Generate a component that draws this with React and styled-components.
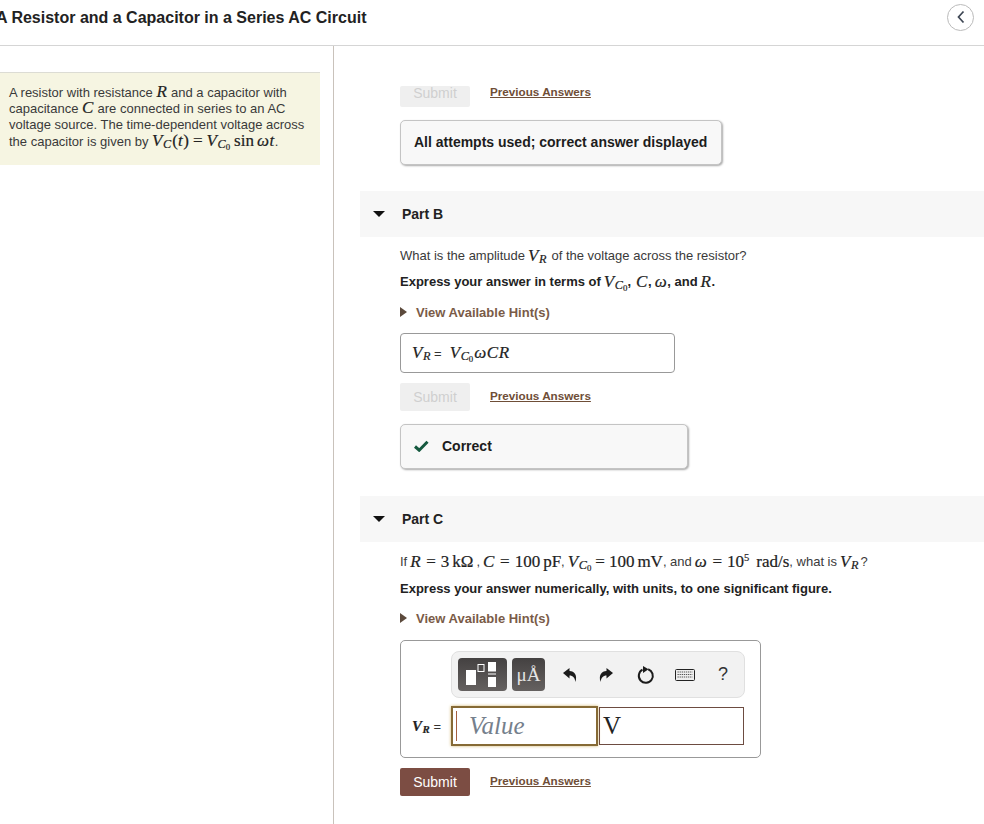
import React from "react";
import styled, { createGlobalStyle } from "styled-components";

const Global = createGlobalStyle`
  html, body { margin: 0; padding: 0; background: #fff; }
  body { font-family: "Liberation Sans", Arial, sans-serif; color: #333; }
`;

const Page = styled.div`
  width: 984px;
  height: 824px;
  overflow: hidden;
`;
const Header = styled.header`
  height: 45px;
  border-bottom: 1px solid #d5d5d5;
  display: flex;
  align-items: center;
  justify-content: space-between;
  padding: 0 10px 0 0;
`;
const Title = styled.h1`
  margin: -9px 0 0 -4px;
  font-size: 16px;
  font-weight: 700;
  line-height: 20px;
  color: #222;
  white-space: nowrap;
`;
const BackButton = styled.button`
  width: 27px;
  height: 27px;
  margin-top: -11px;
  padding: 0;
  border: 1px solid #bbb;
  border-radius: 50%;
  background: #fff;
  display: flex;
  align-items: center;
  justify-content: center;
`;
const Body = styled.div`
  display: grid;
  grid-template-columns: 334px 1fr;
  height: 778px;
`;
const Aside = styled.aside`
  border-right: 1px solid #c9c2bb;
  padding-top: 26px;
`;
const InfoBox = styled.div`
  box-sizing: border-box;
  width: 320px;
  height: 93px;
  padding: 12px 0 0 9px;
  background: #f6f5e2;
  border-top: 1px solid #dcdcd4;
  font-size: 13px;
  color: #3a3a3a;
`;
const InfoLine = styled.div`
  height: 16px;
  line-height: 16px;
  white-space: nowrap;
  margin-top: ${(p) => p.$top || 0}px;
  & > span {
    line-height: 0;
  }
`;
const Main = styled.main`
  padding-top: 40px;
`;
const Indented = styled.div`
  padding-left: 66px;
`;
const SubmitRow = styled.div`
  display: flex;
  align-items: ${(p) => (p.$clipped ? "flex-start" : "center")};
  gap: 20px;
  margin-top: ${(p) => p.$top || 0}px;
`;
const SubmitButton = styled.div`
  width: 70px;
  height: ${(p) => (p.$clipped ? 21 : 28)}px;
  border-radius: 2px;
  font-size: 14px;
  line-height: ${(p) => (p.$clipped ? 14 : 28)}px;
  text-align: center;
  overflow: hidden;
  background: ${(p) => (p.$active ? "#7c4d43" : "#efefef")};
  color: ${(p) => (p.$active ? "#fff" : "#cfcfcf")};
`;
const PrevLink = styled.a`
  font-size: 11.7px;
  font-weight: 700;
  line-height: 14px;
  color: #6f4e37;
  text-decoration: underline;
  margin-top: ${(p) => (p.$clipped ? -1 : -2)}px;
`;
const Feedback = styled.div`
  box-sizing: border-box;
  width: ${(p) => p.$width}px;
  height: 45px;
  margin-top: 13px;
  padding: 0 0 2px 13px;
  display: flex;
  align-items: center;
  gap: 13px;
  border: 1px solid #c4c4c4;
  border-radius: 5px;
  background: #f8f8f8;
  box-shadow: 1px 1px 2px #aaa;
  font-size: 14px;
  font-weight: 700;
  color: #1d1d1d;
`;
const PartHeader = styled.div`
  height: 46px;
  margin: ${(p) => p.$top}px 0 0 26px;
  padding-bottom: 1px;
  box-sizing: border-box;
  background: #f7f7f7;
  display: flex;
  align-items: center;
  font-size: 14px;
  font-weight: 700;
  color: #222;
`;
const Caret = styled.span`
  width: 0;
  height: 0;
  margin: 0 17px 0 13px;
  border-left: 6px solid transparent;
  border-right: 6px solid transparent;
  border-top: 6px solid #111;
`;
const Line = styled.div`
  height: 26px;
  display: flex;
  align-items: center;
  white-space: pre;
  font-size: 13px;
  font-weight: ${(p) => (p.$bold ? 700 : 400)};
  color: ${(p) => (p.$bold ? "#222" : "#3a3a3a")};
  margin-top: ${(p) => p.$top || 0}px;
`;
const Hint = styled.div`
  height: 26px;
  margin-top: ${(p) => p.$top}px;
  display: flex;
  align-items: center;
  gap: 9px;
  font-size: 13px;
  font-weight: 700;
  color: #7a5b47;
`;
const HintArrow = styled.span`
  width: 0;
  height: 0;
  border-top: 5.5px solid transparent;
  border-bottom: 5.5px solid transparent;
  border-left: 7px solid #5c4a3c;
`;
const AnswerBox = styled.div`
  box-sizing: border-box;
  width: 275px;
  height: 40px;
  margin-top: 8px;
  padding: 0 0 2px 11px;
  display: flex;
  align-items: center;
  gap: 8px;
  border: 1px solid #999;
  border-radius: 4px;
  font-size: 13px;
  color: #333;
`;
const Eq = styled.span`
  white-space: pre;
  line-height: 1;
  font-family: "Liberation Serif", serif;
  font-size: ${(p) => p.$size || 17}px;
  font-weight: ${(p) => p.$weight || 400};
  -webkit-text-stroke: 0.2px #222;
  color: #222;
  margin-left: ${(p) => p.$l ?? 3}px;
  margin-right: ${(p) => p.$r ?? 3}px;
`;
const I = styled.i`
  font-style: italic;
  letter-spacing: 0.6px;
`;
const Sub = styled.sub`
  font-size: 0.72em;
  line-height: 0;
  vertical-align: -0.18em;
  font-style: ${(p) => (p.$up ? "normal" : "italic")};
`;
const Sup = styled.sup`
  font-size: 0.62em;
  line-height: 0;
  vertical-align: 0.55em;
`;
const Sp = styled.span`
  display: inline-block;
  width: ${(p) => p.$w || 5}px;
`;
const EditorBox = styled.div`
  box-sizing: border-box;
  width: 361px;
  height: 118px;
  margin-top: 9px;
  padding-top: 10px;
  border: 1px solid #999;
  border-radius: 5px;
`;
const Toolbar = styled.div`
  box-sizing: border-box;
  width: 294px;
  height: 47px;
  margin-left: 50px;
  padding-left: 6px;
  display: flex;
  align-items: center;
  background: #f2f2f2;
  border: 1px solid #e0e0e0;
  border-radius: 8px;
`;
const ToolButton = styled.div`
  box-sizing: border-box;
  flex: none;
  width: ${(p) => p.$w}px;
  height: 33px;
  margin-right: ${(p) => p.$mr}px;
  border-radius: 4px;
  display: flex;
  align-items: center;
  justify-content: center;
  background: linear-gradient(#444141, #656160);
  font-family: "Liberation Serif", serif;
  font-size: 19px;
  color: #e4e4e4;
`;
const PlainTool = styled.div`
  flex: none;
  width: ${(p) => p.$w}px;
  height: 33px;
  margin-left: ${(p) => p.$ml || 0}px;
  display: flex;
  align-items: center;
  justify-content: center;
  font-size: 18px;
  color: #333;
`;
const InputRow = styled.div`
  display: flex;
  align-items: center;
  margin-top: 8px;
  padding-left: 11px;
`;
const InputLabel = styled.div`
  width: 39px;
  white-space: pre;
  font-size: 13px;
  color: #333;
`;
const ValueInput = styled.div`
  box-sizing: border-box;
  width: 147px;
  height: 40px;
  display: flex;
  align-items: center;
  border: 2px solid #866a35;
  box-shadow: 0 0 3px #d2b66f;
  font-family: "Liberation Serif", serif;
  font-style: italic;
  font-size: 25px;
  color: #75808c;
`;
const TextCaret = styled.span`
  width: 1px;
  height: 30px;
  margin: 0 12px 0 3px;
  background: #a5603f;
`;
const UnitInput = styled.div`
  box-sizing: border-box;
  width: 145px;
  height: 38px;
  margin-left: 1px;
  padding-left: 3px;
  border: 1px solid #6d4c41;
  font-family: "Liberation Serif", serif;
  font-size: 25px;
  line-height: 35px;
  color: #222;
`;

const V0 = () => (
  <>
    <I>V</I>
    <Sub>
      C
      <Sub $up>0</Sub>
    </Sub>
  </>
);
const VR = () => (
  <>
    <I>V</I>
    <Sub>R</Sub>
  </>
);

const Undo = ({ flip }) => (
  <svg width="16" height="16" viewBox="0 0 16 16" style={flip ? { transform: "scaleX(-1)" } : undefined}>
    <path d="M1 6 L7.5 1 V4 C12.5 4 15.5 8 13.5 15 C12.8 11 11 8.6 7.5 8.6 V11.5 Z" fill="#1c1c1c" />
  </svg>
);

export default function App() {
  return (
    <Page>
      <Global />
      <Header>
        <Title>A Resistor and a Capacitor in a Series AC Circuit</Title>
        <BackButton aria-label="Back">
          <svg width="10" height="14" viewBox="0 0 10 14">
            <path d="M7.5 1.5 L2.5 7 L7.5 12.5" fill="none" stroke="#3d4653" strokeWidth="1.7" />
          </svg>
        </BackButton>
      </Header>
      <Body>
        <Aside>
          <InfoBox>
            <InfoLine>
              A resistor with resistance <Eq $l={0} $r={0}><I>R</I></Eq> and a capacitor with
            </InfoLine>
            <InfoLine>
              capacitance <Eq $l={0} $r={0}><I>C</I></Eq> are connected in series to an AC
            </InfoLine>
            <InfoLine>voltage source. The time-dependent voltage across</InfoLine>
            <InfoLine $top={1}>
              the capacitor is given by{" "}
              <Eq $l={0} $r={0}>
                <I>V</I><Sub>C</Sub><Sp $w={1} />(<I>t</I>)<Sp $w={4} />=<Sp $w={4} /><V0 /><Sp $w={4} />sin<Sp $w={3} /><I>ωt</I>
              </Eq>
              .
            </InfoLine>
          </InfoBox>
        </Aside>
        <Main>
          <Indented>
            <SubmitRow $clipped>
              <SubmitButton $clipped>Submit</SubmitButton>
              <PrevLink $clipped>Previous Answers</PrevLink>
            </SubmitRow>
            <Feedback $width={322}>All attempts used; correct answer displayed</Feedback>
          </Indented>

          <PartHeader $top={26}>
            <Caret />
            Part B
          </PartHeader>
          <Indented>
            <Line $top={5}>
              What is the amplitude<Eq $r={5}><VR /></Eq>of the voltage across the resistor?
            </Line>
            <Line $bold>
              Express your answer in terms of<Eq $r={0}><V0 /></Eq>,<Eq $l={5} $r={0}><I>C</I></Eq>,<Eq $r={0}><I>ω</I></Eq>, and<Eq $r={0}><I>R</I></Eq>.
            </Line>
            <Hint $top={5}>
              <HintArrow />
              View Available Hint(s)
            </Hint>
            <AnswerBox>
              <span>
                <Eq $l={0} $r={0}><VR /></Eq> =
              </span>
              <Eq $l={0} $r={0}>
                <V0 /><Sp $w={1} /><I>ωCR</I>
              </Eq>
            </AnswerBox>
            <SubmitRow $top={10}>
              <SubmitButton>Submit</SubmitButton>
              <PrevLink>Previous Answers</PrevLink>
            </SubmitRow>
            <Feedback $width={288}>
              <svg width="15" height="12" viewBox="0 0 15 12">
                <path d="M1 6.5 L5.2 10.2 L13.5 1.8" fill="none" stroke="#15593f" strokeWidth="3" />
              </svg>
              Correct
            </Feedback>
          </Indented>

          <PartHeader $top={27}>
            <Caret />
            Part C
          </PartHeader>
          <Indented>
            <Line $top={6}>
              If<Eq>
                <I>R</I><Sp />=<Sp />3<Sp $w={3} />kΩ
              </Eq>
              ,<Eq $r={0}>
                <I>C</I><Sp />=<Sp />100<Sp $w={3} />pF
              </Eq>
              ,<Eq $r={0}>
                <V0 /><Sp $w={4} />=<Sp $w={4} />100<Sp $w={3} />mV
              </Eq>
              , and<Eq $r={0}>
                <I>ω</I><Sp />=<Sp />10<Sup>5</Sup><Sp $w={7} />rad/s
              </Eq>
              , what is<Eq $r={2}><VR /></Eq>?
            </Line>
            <Line $bold $top={1}>Express your answer numerically, with units, to one significant figure.</Line>
            <Hint $top={4}>
              <HintArrow />
              View Available Hint(s)
            </Hint>
            <EditorBox>
              <Toolbar>
                <ToolButton $w={49} $mr={5}>
                  <svg width="34" height="27" viewBox="0 0 34 27">
                    <rect x="0" y="9" width="10" height="15" fill="#fff" />
                    <rect x="12" y="3.5" width="6" height="7" fill="none" stroke="#fff" strokeWidth="1" />
                    <rect x="22" y="1" width="8" height="9.5" fill="#fff" />
                    <rect x="22" y="12.5" width="8" height="1" fill="#fff" />
                    <rect x="22" y="16" width="8" height="10" fill="#fff" />
                  </svg>
                </ToolButton>
                <ToolButton $w={33} $mr={0}>μÅ</ToolButton>
                <PlainTool $w={50}><Undo /></PlainTool>
                <PlainTool $w={22}><Undo flip /></PlainTool>
                <PlainTool $w={58}>
                  <svg width="18" height="20" viewBox="0 0 18 20">
                    <path d="M11.2 4.2 A7 7 0 1 1 5.5 4.6" fill="none" stroke="#1c1c1c" strokeWidth="2" />
                    <path d="M6 1 L11.5 4.3 L6 8 Z" fill="#1c1c1c" />
                  </svg>
                </PlainTool>
                <PlainTool $w={20}>
                  <svg width="20" height="12" viewBox="0 0 20 12">
                    <rect x="0.5" y="0.5" width="19" height="11" rx="1" fill="#eee" stroke="#222" />
                    <path d="M2.5 3 H17.5 M2.5 5.5 H17.5 M2.5 8 H17.5" stroke="#555" strokeWidth="1.2" strokeDasharray="1.3 0.8" />
                  </svg>
                </PlainTool>
                <PlainTool $w={46} $ml={5}>?</PlainTool>
              </Toolbar>
              <InputRow>
                <InputLabel>
                  <Eq $l={0} $r={0} $size={15} $weight={700}><VR /></Eq> =
                </InputLabel>
                <ValueInput>
                  <TextCaret />
                  Value
                </ValueInput>
                <UnitInput>V</UnitInput>
              </InputRow>
            </EditorBox>
            <SubmitRow $top={10}>
              <SubmitButton $active>Submit</SubmitButton>
              <PrevLink>Previous Answers</PrevLink>
            </SubmitRow>
          </Indented>
        </Main>
      </Body>
    </Page>
  );
}
